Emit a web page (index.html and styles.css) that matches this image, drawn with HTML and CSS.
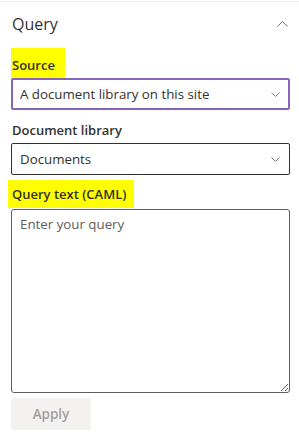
FILE: index.html
```html
<!DOCTYPE html>
<html lang="en">
    <head>
        <meta charset="UTF-8" />
        <title>Query</title>
        <link rel="stylesheet" href="styles.css">
    </head>
    <body>
        <div class="pane">
            <div class="pane-head">
                <span class="pane-title">Query</span>
                <svg class="chev-up" width="11" height="6" viewBox="0 0 11 6"><polyline points="0.5,5.5 5.5,0.5 10.5,5.5" /></svg>
            </div>

            <div class="field">
                <label class="label mark mark-source">Source</label>
                <div class="dropdown focused">
                    <span>A document library on this site</span>
                    <svg class="chev-down" width="9" height="5" viewBox="0 0 9 5"><polyline points="0.5,0.5 4.5,4.5 8.5,0.5" /></svg>
                </div>
            </div>

            <div class="field">
                <label class="label">Document library</label>
                <div class="dropdown">
                    <span>Documents</span>
                    <svg class="chev-down" width="9" height="5" viewBox="0 0 9 5"><polyline points="0.5,0.5 4.5,4.5 8.5,0.5" /></svg>
                </div>
            </div>

            <div class="field">
                <label class="label mark mark-query">Query text (CAML)</label>
                <textarea class="query" placeholder="Enter your query"></textarea>
            </div>

            <button class="apply" disabled>Apply</button>
        </div>
    </body>
</html>
```

FILE: styles.css
```css
body {
    margin: 0;
    padding-top: 1px;
    font-family: "Open Sans", "Noto Sans", sans-serif;
    color: #323130;
    background: #fff;
}

.pane {
    border-top: 1px solid #edebe9;
    padding: 0 9px 0 11px;
}

.pane-head {
    display: flex;
    align-items: center;
    justify-content: space-between;
    height: 46px;
    padding-left: 1px;
}
.pane-title {
    font-size: 16px;
    margin-top: -2px;
}
.chev-up {
    margin-right: 2px;
    margin-top: -3px;
}
.chev-up polyline, .chev-down polyline {
    fill: none;
    stroke: #797775;
    stroke-width: 1;
}
.chev-down {
    margin-right: 1px;
}

.field {
    display: flex;
    flex-direction: column;
    align-items: flex-start;
    margin-bottom: 5px;
}

.label {
    font-size: 13px;
    font-weight: 600;
    line-height: 20px;
    padding: 5px 0 3px 1px;
}
.mark {
    background-color: #ffff00;
}
.mark-source {
    padding: 7px 10px 3px 1px;
}
.mark-query {
    margin-left: -3px;
    padding: 4px 8px 4px 4px;
    margin-bottom: 1px;
}

.dropdown {
    box-sizing: border-box;
    width: 100%;
    height: 32px;
    border: 1px solid #323130;
    border-radius: 2px;
    display: flex;
    align-items: center;
    justify-content: space-between;
    padding: 0 8px 0 8px;
    font-size: 13.3px;
}
.dropdown.focused {
    border: 2px solid #8764b8;
    padding-left: 7px;
    padding-right: 7px;
}

.query {
    box-sizing: border-box;
    width: 100%;
    height: 184px;
    border: 1px solid #605e5c;
    border-radius: 3px;
    padding: 6px 8px;
    font-family: inherit;
    font-size: 13.3px;
    line-height: 17px;
    color: #323130;
    resize: vertical;
}
.query::placeholder {
    color: #605e5c;
}

.apply {
    width: 80px;
    height: 32px;
    border: none;
    border-radius: 2px;
    background-color: #f3f2f1;
    color: #a19f9d;
    font-family: inherit;
    font-size: 13.5px;
    font-weight: 600;
}
```
